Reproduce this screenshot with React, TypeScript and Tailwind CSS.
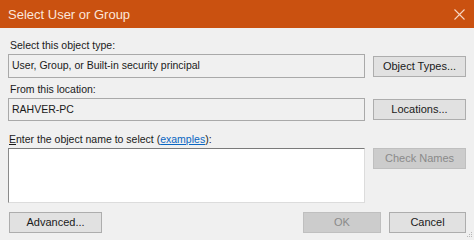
import React from "react";

const font = { fontFamily: '"Liberation Sans", Arial, sans-serif' };

function Btn({ children, disabled, className = "" }: { children: React.ReactNode; disabled?: boolean; className?: string }) {
  return (
    <div
      className={
        "flex items-center justify-center h-[21px] text-[11px] border " +
        (disabled
          ? "bg-[#cccccc] border-[#bfbfbf] text-[#8a8a8a] "
          : "bg-[#e1e1e1] border-[#adadad] text-[#1a1a1a] ") +
        className
      }
    >
      {children}
    </div>
  );
}

export default function App() {
  return (
    <div className="w-[474px] h-[240px] bg-[#f0f0f0] flex flex-col relative overflow-hidden" style={font}>
      <div className="h-[28px] bg-[#ca5110] flex items-center justify-between pl-[8px] pr-[8px]">
        <span className="text-[13px] text-[#fbe6da] leading-none">Select User or Group</span>
        <svg width="11" height="11" viewBox="0 0 11 11" className="mr-[1px]">
          <path d="M0.5 0.5 L10.5 10.5 M10.5 0.5 L0.5 10.5" stroke="#f6d6c4" strokeWidth="1.1" />
        </svg>
      </div>
      <div className="flex flex-col px-[8px] pt-[9px] text-[10.5px] text-[#1a1a1a]">
        <div className="h-[17px] leading-[17px] pl-[2px]">Select this object type:</div>
        <div className="flex items-center gap-[8px]">
          <div className="flex-1 h-[24px] border border-[#a9a9a9] bg-[#f0f0f0] flex items-center pl-[3px]">
            User, Group, or Built-in security principal
          </div>
          <Btn className="w-[93px]">Object Types...</Btn>
        </div>
        <div className="mt-[3px] h-[17px] leading-[17px] pl-[2px]">From this location:</div>
        <div className="flex items-center gap-[8px]">
          <div className="flex-1 h-[23px] border border-[#a9a9a9] bg-[#f0f0f0] flex items-center pl-[3px]">
            RAHVER-PC
          </div>
          <Btn className="w-[93px]">Locations...</Btn>
        </div>
        <div className="mt-[9px] h-[18px] leading-[18px] pl-[1px]">
          <span className="underline">E</span>nter the object name to select (
          <span className="text-[#0a66c2] underline">examples</span>):
        </div>
        <div className="flex items-start gap-[8px]">
          <div className="flex-1 h-[55px] bg-white border border-[#dcdcdc] border-t-[#7a7a7a] border-l-[#8a8a8a]"></div>
          <Btn disabled className="w-[93px]">Check Names</Btn>
        </div>
        <div className="mt-[9px] flex items-center">
          <Btn className="w-[93px] ml-[1px]">Advanced...</Btn>
          <div className="flex-1" />
          <Btn disabled className="w-[78px]">OK</Btn>
          <Btn className="w-[77px] ml-[8px]">Cancel</Btn>
        </div>
      </div>
      <svg width="6" height="6" viewBox="0 0 6 6" className="absolute right-[1px] bottom-[2px]">
        <rect x="4" y="0" width="1" height="1" fill="#b8b8b8" />
        <rect x="2" y="2" width="1" height="1" fill="#b8b8b8" />
        <rect x="4" y="2" width="1" height="1" fill="#b8b8b8" />
        <rect x="0" y="4" width="1" height="1" fill="#b8b8b8" />
        <rect x="2" y="4" width="1" height="1" fill="#b8b8b8" />
        <rect x="4" y="4" width="1" height="1" fill="#b8b8b8" />
      </svg>
    </div>
  );
}
